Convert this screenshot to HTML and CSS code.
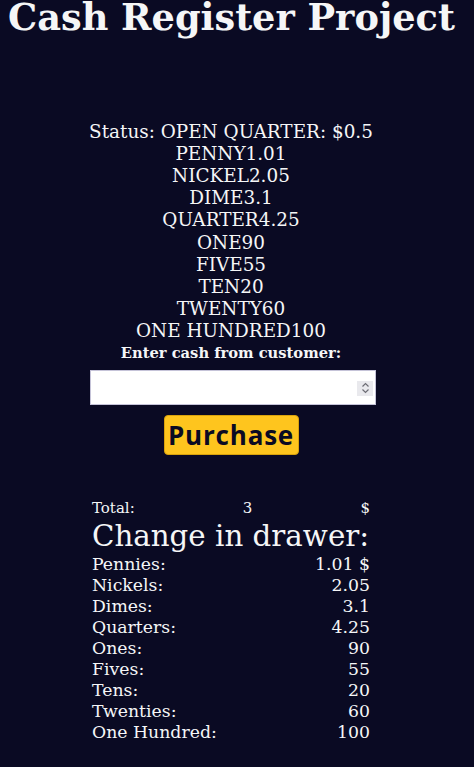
FILE: index.html
```html
<!doctype html>
<html lang="en">
<head>
    <meta charset="UTF-8">
    <meta name="viewport" content="width=device-width, initial-scale=1.0">
    <title>Cash Register Project</title>
    <link rel="stylesheet" href="styles.css">
</head>
<body>
<h1 class="title">Cash Register Project</h1>

<main class="register">
    <div class="change-due" id="change-due">
        <p>Status: OPEN QUARTER: $0.5</p>
        <p>PENNY1.01</p>
        <p>NICKEL2.05</p>
        <p>DIME3.1</p>
        <p>QUARTER4.25</p>
        <p>ONE90</p>
        <p>FIVE55</p>
        <p>TEN20</p>
        <p>TWENTY60</p>
        <p>ONE HUNDRED100</p>
    </div>

    <label class="cash-label" for="cash">Enter cash from customer:</label>
    <div class="cash-field">
        <input type="number" id="cash" class="cash-input">
        <span class="spinner">
            <svg width="9" height="12" viewBox="0 0 9 12">
                <path d="M1.5 4.5 L4.5 1.5 L7.5 4.5 M1.5 7.5 L4.5 10.5 L7.5 7.5" fill="none" stroke="#6d6d75" stroke-width="1.2"/>
            </svg>
        </span>
    </div>
    <button class="purchase-btn" id="purchase-btn">Purchase</button>

    <div class="total">
        <span>Total:</span>
        <span id="price">3</span>
        <span>$</span>
    </div>

    <h2 class="drawer-title">Change in drawer:</h2>
    <ul class="drawer">
        <li><span>Pennies:</span><span>1.01 $</span></li>
        <li><span>Nickels:</span><span>2.05</span></li>
        <li><span>Dimes:</span><span>3.1</span></li>
        <li><span>Quarters:</span><span>4.25</span></li>
        <li><span>Ones:</span><span>90</span></li>
        <li><span>Fives:</span><span>55</span></li>
        <li><span>Tens:</span><span>20</span></li>
        <li><span>Twenties:</span><span>60</span></li>
        <li><span>One Hundred:</span><span>100</span></li>
    </ul>
</main>
</body>
</html>
```

FILE: styles.css
```css
* {
    margin: 0;
    padding: 0;
    box-sizing: border-box;
}

body {
    background: #0a0a23;
    color: #f5f6f7;
    font-family: "DejaVu Serif", serif;
    padding: 0 12px 0 0;
}

.title {
    font-size: 36.7px;
    font-weight: 700;
    padding-left: 8px;
    line-height: 0.97;
    white-space: nowrap;
}

.register {
    width: 286px;
    margin: 0 auto;
}

.change-due {
    margin-top: 85px;
    text-align: center;
    font-size: 18.4px;
    line-height: 22.2px;
    white-space: nowrap;
}

.cash-label {
    display: block;
    text-align: center;
    font-size: 14.7px;
    font-weight: 700;
    margin-top: 1px;
}

.cash-field {
    position: relative;
    width: 286px;
    margin: 9px 0 0 2px;
}

.cash-input {
    display: block;
    width: 286px;
    height: 35px;
    border: 1px solid #c5c3d8;
    background: #fff;
    font-size: 16px;
    padding: 0 6px;
}

.spinner {
    position: absolute;
    right: 3px;
    top: 11px;
    width: 16px;
    height: 15px;
    background: #e9e9ed;
    display: flex;
    align-items: center;
    justify-content: center;
}

.purchase-btn {
    display: block;
    margin: 10px auto 0;
    width: 135px;
    height: 40px;
    background: #fec51e;
    border: 1px solid #d9a20c;
    border-radius: 4px;
    color: #0a0a23;
    font-family: "Open Sans", sans-serif;
    font-size: 26px;
    font-weight: 700;
    letter-spacing: 0.8px;
    cursor: pointer;
}

.total {
    display: flex;
    justify-content: space-between;
    width: 278px;
    margin: 44px auto 0;
    font-size: 15px;
}

.drawer-title {
    width: 278px;
    margin: 1px auto 0;
    font-size: 29.3px;
    font-weight: 400;
    line-height: 36px;
    white-space: nowrap;
}

.drawer {
    list-style: none;
    width: 278px;
    margin: 0 auto;
    font-size: 17.3px;
    line-height: 21.1px;
}

.drawer li {
    display: flex;
    justify-content: space-between;
}
```
